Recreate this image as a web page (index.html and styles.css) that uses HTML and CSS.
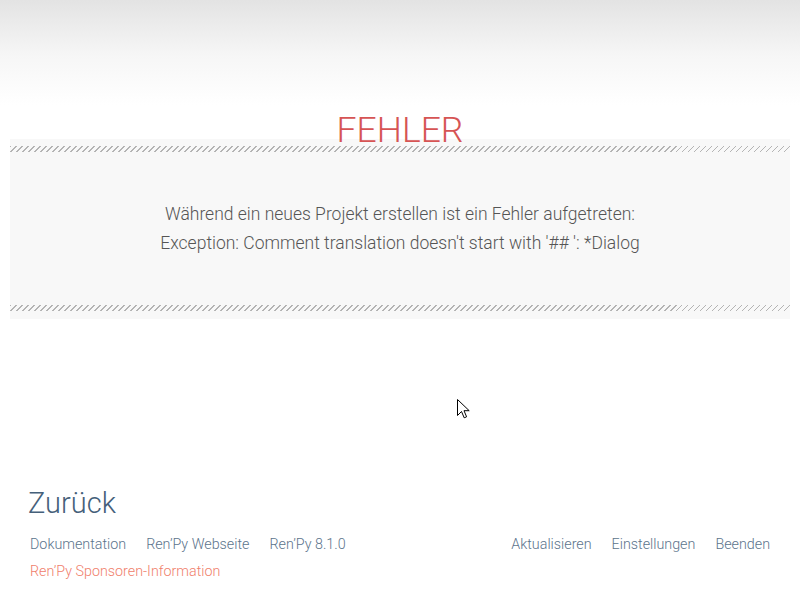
FILE: index.html
```html
<!DOCTYPE html>
<html lang="de">
<head>
<meta charset="utf-8">
<title>Fehler</title>
<link rel="stylesheet" href="styles.css">
</head>
<body>
<div class="screen">
  <h1 class="title">FEHLER</h1>
  <section class="panel">
    <div class="hatch"></div>
    <div class="message">
      <p>Während ein neues Projekt erstellen ist ein Fehler aufgetreten:</p>
      <p>Exception: Comment translation doesn't start with '## ': *Dialog</p>
    </div>
    <div class="hatch"></div>
  </section>
  <div class="spacer"></div>
  <footer class="footer">
    <a class="back" href="#">Zurück</a>
    <nav class="links">
      <div class="group">
        <a href="#">Dokumentation</a>
        <a href="#">Ren’Py Webseite</a>
        <a href="#">Ren’Py 8.1.0</a>
      </div>
      <div class="group">
        <a href="#">Aktualisieren</a>
        <a href="#">Einstellungen</a>
        <a href="#">Beenden</a>
      </div>
    </nav>
    <a class="sponsor" href="#">Ren’Py Sponsoren-Information</a>
  </footer>
  <svg class="cursor" width="13" height="20" viewBox="0 0 13 20">
    <path d="M0.5 0.5 L0.5 16.5 L4.5 12.5 L7.2 18.8 L9.6 17.8 L7 11.7 L12.2 11.7 Z" fill="#fff" stroke="#000" stroke-width="1" stroke-linejoin="miter"/>
  </svg>
</div>
</body>
</html>
```
FILE: styles.css
```css
html, body {
  margin: 0;
  padding: 0;
}
body {
  background: #fff;
  font-family: Roboto, "Liberation Sans", sans-serif;
  font-weight: 300;
}
.screen {
  position: relative;
  width: 800px;
  height: 600px;
  display: flex;
  flex-direction: column;
  background: linear-gradient(#e3e3e3 0, #f6f6f6 55px, #ffffff 105px) no-repeat;
  background-size: 100% 105px;
  overflow: hidden;
}
.title {
  position: relative;
  z-index: 1;
  margin: 112px 0 0;
  font-size: 35.5px;
  line-height: 36px;
  font-weight: 300;
  color: #d65454;
  text-align: center;
}
.panel {
  margin: -9px 10px 0;
  height: 180px;
  box-sizing: border-box;
  padding: 7px 0 8px;
  background: #f8f8f8;
  display: flex;
  flex-direction: column;
}
.hatch {
  height: 6px;
  background: repeating-linear-gradient(135deg, #b4b4b4 0, #b4b4b4 1px, transparent 1px, transparent 4.24px);
}
.message {
  flex: 1;
  display: flex;
  flex-direction: column;
  justify-content: center;
  text-align: center;
  color: #555;
  font-size: 17.5px;
  line-height: 29px;
}
.message p {
  margin: 0;
}
.spacer {
  flex: 1;
}
.footer {
  display: flex;
  flex-direction: column;
  padding: 0 30px 15px 28px;
}
.footer a {
  text-decoration: none;
}
.back {
  font-size: 29px;
  line-height: 34px;
  color: #45607a;
  margin-bottom: 11px;
}
.links {
  display: flex;
  justify-content: space-between;
  padding-left: 2px;
}
.group {
  display: flex;
  gap: 20px;
}
.group a, .sponsor {
  font-size: 14.3px;
  line-height: 27px;
  color: #5c748c;
}
.sponsor {
  padding-left: 2px;
  color: #f0806c;
}
.cursor {
  position: absolute;
  left: 457px;
  top: 399px;
}
```
